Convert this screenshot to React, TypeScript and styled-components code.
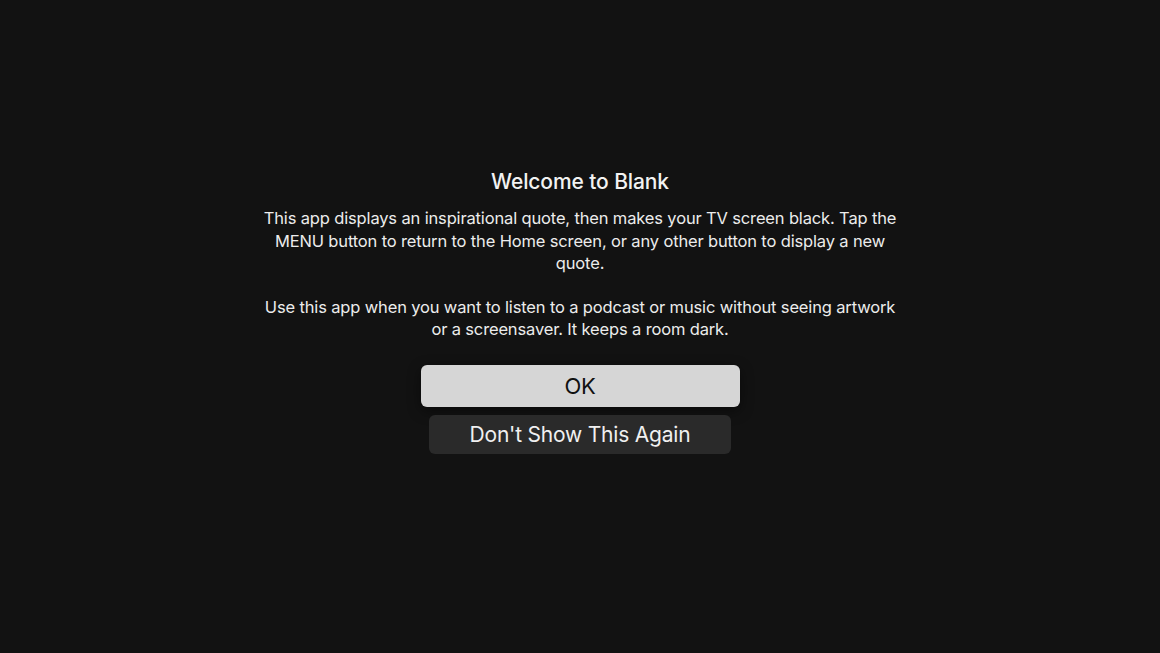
import React from "react";
import styled, { createGlobalStyle } from "styled-components";

const GlobalStyle = createGlobalStyle`
  html, body {
    margin: 0;
    padding: 0;
    background: #121212;
  }
  body {
    font-family: Inter, "Noto Sans", "Liberation Sans", sans-serif;
    -webkit-font-smoothing: antialiased;
  }
`;

const Screen = styled.div`
  width: 100vw;
  height: 100vh;
  background: #121212;
  display: flex;
  flex-direction: column;
  align-items: center;
  padding-top: 168px;
  box-sizing: border-box;
`;

const Title = styled.h1`
  margin: 0;
  font-size: 21px;
  line-height: 28px;
  font-weight: 500;
  color: #f2f2f2;
  letter-spacing: -0.1px;
`;

const Body = styled.div`
  margin-top: 11px;
  width: 638px;
  display: flex;
  flex-direction: column;
  gap: 21px;
`;

const Paragraph = styled.p`
  margin: 0;
  text-align: center;
  font-size: 16.5px;
  line-height: 22.5px;
  font-weight: 400;
  color: #ececec;
  letter-spacing: -0.15px;
`;

const Actions = styled.div`
  margin-top: 24px;
  display: flex;
  flex-direction: column;
  align-items: center;
  gap: 8px;
`;

const ActionButton = styled.button<{ $focused?: boolean }>`
  border: none;
  font-family: inherit;
  cursor: pointer;
  display: flex;
  align-items: center;
  justify-content: center;
  border-radius: 6px;
  width: ${(p) => (p.$focused ? "319px" : "302px")};
  height: ${(p) => (p.$focused ? "42px" : "39px")};
  background: ${(p) => (p.$focused ? "#d6d6d6" : "#2a2a2a")};
  color: ${(p) => (p.$focused ? "#111111" : "#f0f0f0")};
  font-size: ${(p) => (p.$focused ? "22px" : "21px")};
  font-weight: 400;
  letter-spacing: -0.2px;
  box-shadow: ${(p) => (p.$focused ? "0 4px 14px rgba(0, 0, 0, 0.45)" : "none")};
`;

const App = () => {
  return (
    <>
      <GlobalStyle />
      <Screen>
        <Title>Welcome to Blank</Title>
        <Body>
          <Paragraph>
            This app displays an inspirational quote, then makes your TV screen black. Tap the
            MENU button to return to the Home screen, or any other button to display a new
            quote.
          </Paragraph>
          <Paragraph>
            Use this app when you want to listen to a podcast or music without seeing artwork
            or a screensaver. It keeps a room dark.
          </Paragraph>
        </Body>
        <Actions>
          <ActionButton $focused>OK</ActionButton>
          <ActionButton>Don't Show This Again</ActionButton>
        </Actions>
      </Screen>
    </>
  );
};

export default App;
